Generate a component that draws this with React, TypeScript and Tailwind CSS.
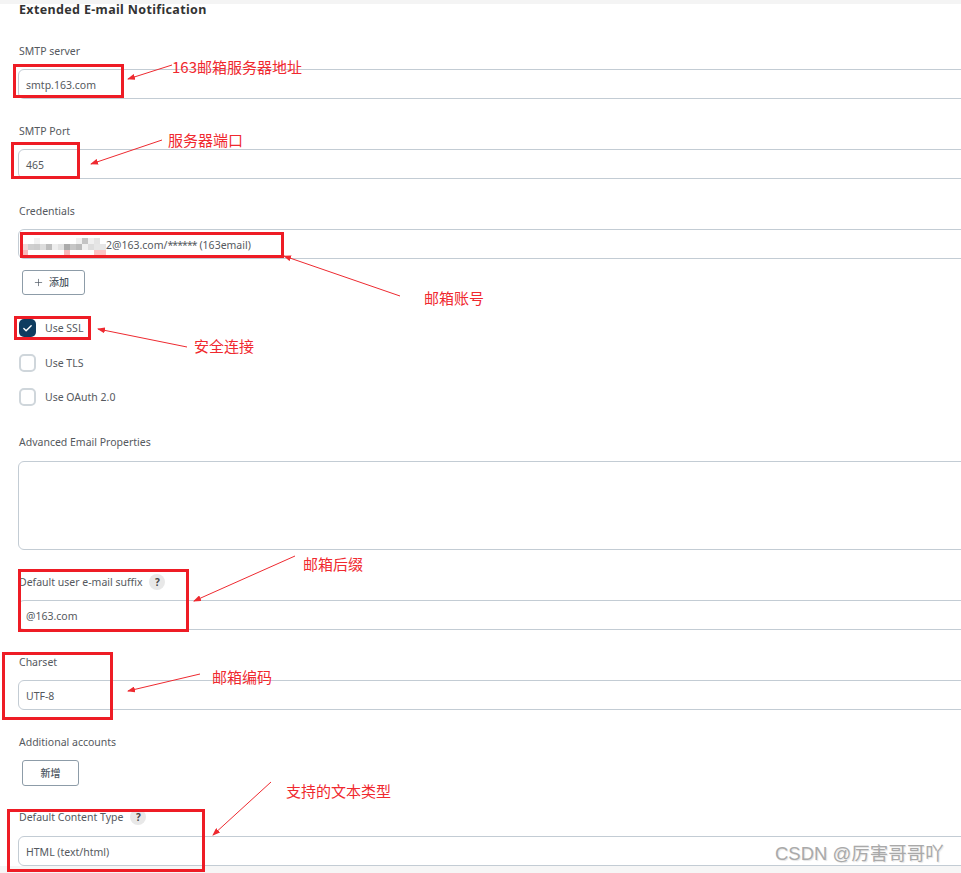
import React from 'react';
import { Check, Plus } from 'lucide-react';

// pixelated patch the author put over the account name
const MOSAIC = [
  'bg-white', 'bg-white', 'bg-[#f2f2f2]', 'bg-white', 'bg-white', 'bg-white', 'bg-white', 'bg-white', 'bg-white', 'bg-[#f0f0f0]', 'bg-[#c4c4c4]', 'bg-[#f0f0f0]', 'bg-[#e4e4e4]', 'bg-white',
  'bg-[#f0d8d8]', 'bg-[#cfcfcf]', 'bg-[#cccccc]', 'bg-[#dddddd]', 'bg-[#bdbdbd]', 'bg-[#eeeeee]', 'bg-[#e2e2e2]', 'bg-[#ababab]', 'bg-[#c6c6c6]', 'bg-[#bbbbbb]', 'bg-[#f0f0f0]', 'bg-[#dddddd]', 'bg-[#e6e6e6]', 'bg-[#e6e6e6]',
  'bg-[#f6b9bb]', 'bg-white', 'bg-white', 'bg-white', 'bg-white', 'bg-white', 'bg-white', 'bg-[#f6b9bb]', 'bg-white', 'bg-white', 'bg-white', 'bg-white', 'bg-[#fbc4c6]', 'bg-[#fbc4c6]',
];

// red marks drawn on the screenshot: [x, y, w, h]
const BOXES = [
  [13, 64, 111, 34],
  [11, 142, 69, 37],
  [20, 232, 264, 26],
  [14, 316, 77, 24],
  [18, 569, 171, 63],
  [2, 652, 111, 68],
  [7, 809, 198, 63],
];

const ARROWS = [
  [172, 65, 128, 79],
  [162, 140, 91, 164],
  [400, 296, 284, 256],
  [187, 347, 98, 329],
  [295, 556, 194, 601],
  [200, 674, 128, 691],
  [271, 782, 213, 835],
];

const NOTES: [number, number, string][] = [
  [172, 73, '163邮箱服务器地址'],
  [168, 146, '服务器端口'],
  [424, 304, '邮箱账号'],
  [194, 352, '安全连接'],
  [303, 570, '邮箱后缀'],
  [212, 683, '邮箱编码'],
  [286, 797, '支持的文本类型'],
];

const Label = ({ children, help }: { children: React.ReactNode; help?: boolean }) => (
  <div className="ml-px flex h-4 items-center text-[10.5px] leading-4 text-[#55595e]">
    {children}
    {help && (
      <span className="ml-[7px] flex h-4 w-4 items-center justify-center rounded-full bg-[#e8e8e8] text-[10px] font-bold text-[#444]">?</span>
    )}
  </div>
);

const Input = ({ children, className = 'mt-[10px]' }: { children?: React.ReactNode; className?: string }) => (
  <div className={`-mr-3 flex h-[30px] items-center rounded-md border border-[#c3ccd4] bg-white pl-[7px] pt-[3px] text-[10.5px] text-[#55595e] ${className}`}>
    {children}
  </div>
);

const CheckRow = ({ label, checked, className }: { label: string; checked?: boolean; className: string }) => (
  <div className={`ml-px flex h-[18px] items-center gap-[9px] text-[10.5px] text-[#55595e] ${className}`}>
    {checked ? (
      <span className="flex h-[18px] w-[17px] items-center justify-center rounded-[5px] bg-[#0e3c60]">
        <Check size={11} strokeWidth={3} className="text-white" />
      </span>
    ) : (
      <span className="h-[18px] w-[17px] rounded-[5px] border-2 border-[#cfd6db] bg-white" />
    )}
    <span className="pt-[2px]">{label}</span>
  </div>
);

const App: React.FC = () => {
  return (
    <div className='relative h-[873px] w-[961px] overflow-hidden bg-white font-["Noto_Sans","Noto_Sans_CJK_SC",sans-serif]'>
      <div className="h-1 bg-[#f4f4f4]" />

      <div className="pl-[18px]">
        <h2 className="ml-px h-3 text-[12.5px] font-bold leading-3 tracking-[0.35px] text-[#333]">Extended E-mail Notification</h2>

        <div className="mt-[27px]"><Label>SMTP server</Label></div>
        <Input>smtp.163.com</Input>

        <div className="mt-6"><Label>SMTP Port</Label></div>
        <Input>465</Input>

        <div className="mt-6"><Label>Credentials</Label></div>
        <Input>
          <span className="pl-[80px]">
            2@163.com/<span className="tracking-[-0.9px]">******</span> (163email)
          </span>
        </Input>

        <button className="mt-[11px] ml-1 flex h-[25px] w-[63px] items-center rounded-[3px] border border-[#8d9ca8] pl-[10px] text-[10px] font-medium text-[#4b5560]">
          <Plus size={11} strokeWidth={1.5} />
          <span className="ml-[5px]">添加</span>
        </button>

        <CheckRow label="Use SSL" checked className="mt-6" />
        <CheckRow label="Use TLS" className="mt-[17px]" />
        <CheckRow label="Use OAuth 2.0" className="mt-4" />

        <div className="mt-7"><Label>Advanced Email Properties</Label></div>
        <div className="mt-[11px] -mr-3 h-[89px] rounded-md border border-[#c3ccd4] bg-white" />

        <div className="mt-6"><Label help>Default user e-mail suffix</Label></div>
        <Input>@163.com</Input>

        <div className="mt-6"><Label>Charset</Label></div>
        <Input>UTF-8</Input>

        <div className="mt-6"><Label>Additional accounts</Label></div>
        <button className="mt-[10px] ml-1 flex h-[26px] w-[57px] items-center justify-center rounded-[3px] border border-[#8d9ca8] text-[10px] font-medium text-[#4b5560]">
          新增
        </button>

        <div className="mt-[23px]"><Label help>Default Content Type</Label></div>
        <Input className="mt-[11px]">HTML (text/html)</Input>
      </div>

      <div className="h-2 bg-[#f6f6f6]" />

      {/* screenshot annotations: they sit on top of the form */}
      <div className="absolute left-[22px] top-[238px] grid grid-cols-[repeat(14,6px)] grid-rows-[repeat(3,6px)]">
        {MOSAIC.map((c, i) => (
          <div key={i} className={c} />
        ))}
      </div>

      <svg className='absolute left-0 top-0 font-["Noto_Sans_CJK_SC",sans-serif]' width="961" height="873" fill="none">
        <defs>
          <marker id="tip" markerUnits="userSpaceOnUse" markerWidth="8" markerHeight="6" refX="7" refY="3" orient="auto">
            <path d="M0 0 L8 3 L0 6 Z" fill="#ee2a30" />
          </marker>
        </defs>
        {BOXES.map(([x, y, w, h], i) => (
          <rect key={i} x={x + 1.5} y={y + 1.5} width={w - 3} height={h - 3} stroke="#ee1c25" strokeWidth="3" />
        ))}
        {ARROWS.map(([x1, y1, x2, y2], i) => (
          <line key={i} x1={x1} y1={y1} x2={x2} y2={y2} stroke="#ee2a30" strokeWidth="1" markerEnd="url(#tip)" />
        ))}
        {NOTES.map(([x, y, t], i) => (
          <text key={i} x={x} y={y} fontSize="15" fill="#f0292f">{t}</text>
        ))}
      </svg>

      <div className='absolute left-[775px] top-[842px] whitespace-nowrap text-[18.5px] leading-6 text-[#a9a9a9] [text-shadow:1px_1px_1px_#e4e4e4] font-["Liberation_Sans","Noto_Sans_CJK_SC",sans-serif]'>
        CSDN @厉害哥哥吖
      </div>
    </div>
  );
};

export default App;
